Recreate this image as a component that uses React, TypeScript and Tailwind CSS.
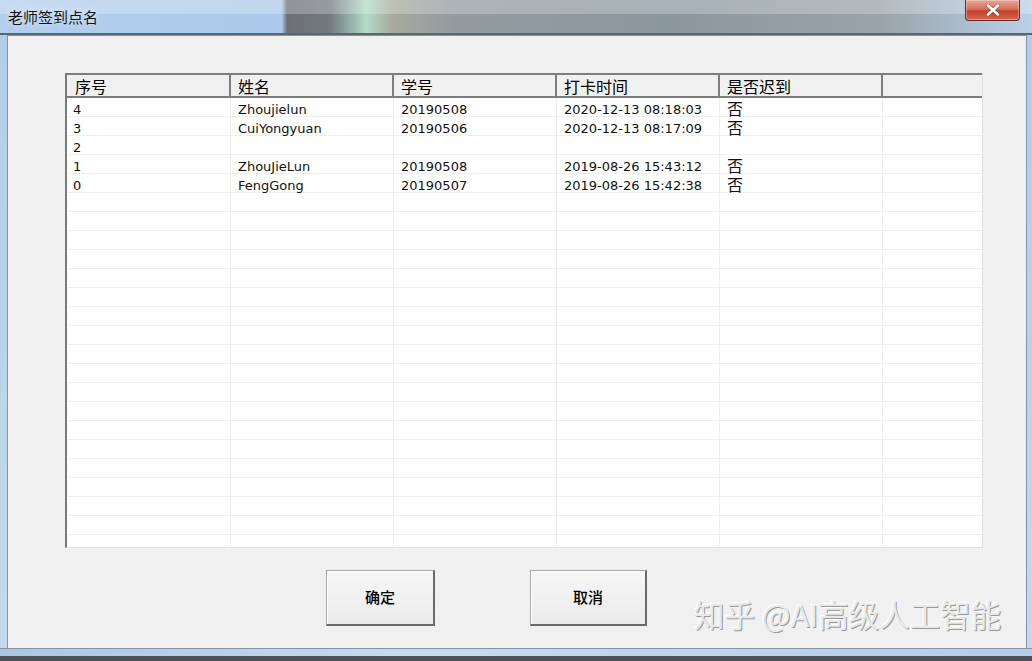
import React from "react";

type Row = { no: string; name: string; sid: string; time: string; late: string };

const rows: Row[] = [
  { no: "4", name: "Zhoujielun", sid: "20190508", time: "2020-12-13 08:18:03", late: "否" },
  { no: "3", name: "CuiYongyuan", sid: "20190506", time: "2020-12-13 08:17:09", late: "否" },
  { no: "2", name: "", sid: "", time: "", late: "" },
  { no: "1", name: "ZhouJieLun", sid: "20190508", time: "2019-08-26 15:43:12", late: "否" },
  { no: "0", name: "FengGong", sid: "20190507", time: "2019-08-26 15:42:38", late: "否" },
];

const headers = ["序号", "姓名", "学号", "打卡时间", "是否迟到", ""];

const cjk = "font-['Noto_Sans_CJK_SC','Noto_Sans',sans-serif]";
const latin = "font-['DejaVu_Sans','Noto_Sans_CJK_SC',sans-serif]";

function TitleBar() {
  return (
    <div className="relative h-[35px] shrink-0 bg-[linear-gradient(to_right,#b3cfee_0%,#abc9ea_27.3%,#6c7176_27.8%,#737a7f_32%,#b2dcc8_35.5%,#a8aa9c_38%,#939b9f_44%,#8b979f_65%,#9aa3a9_85%,#a9bccb_93%,#b8d0e8_100%)]">
      <div className="absolute inset-x-0 top-0 h-[14px] bg-white/25" />
      <div className="absolute inset-x-0 bottom-0 h-[2px] bg-[#5d666e]" />
      <div className={`absolute left-[8px] top-[7px] text-[15px] leading-[20px] text-[#111] ${cjk} [text-shadow:0_0_6px_rgba(255,255,255,0.8)]`}>
        老师签到点名
      </div>
      <div className="absolute right-[12px] top-0 flex h-[21px] w-[55px] items-center justify-center rounded-b-[4px] border border-t-0 border-[#6b2a24] bg-[linear-gradient(to_bottom,#e8a597_0%,#d8705c_45%,#c2412c_55%,#d4664c_100%)] shadow-[inset_0_0_0_1px_rgba(255,255,255,0.35)]">
        <svg width="14" height="12" viewBox="0 0 14 12">
          <path d="M2 1.5 L12 10.5 M12 1.5 L2 10.5" stroke="#3a1410" strokeWidth="4" strokeLinecap="round" opacity="0.35" />
          <path d="M2 1.5 L12 10.5 M12 1.5 L2 10.5" stroke="#ffffff" strokeWidth="2.6" strokeLinecap="round" />
        </svg>
      </div>
    </div>
  );
}

function Table() {
  const widths = ["w-[164px]", "w-[163px]", "w-[163px]", "w-[163px]", "w-[163px]", "flex-1"];
  const empty = Array.from({ length: 24 - rows.length });
  return (
    <div className="flex h-[475px] w-[918px] flex-col overflow-hidden border-l-2 border-r border-b border-l-[#7a7a7a] border-r-[#e2e2e2] border-b-[#e2e2e2] bg-white">
      <div className="flex h-[25px] shrink-0 border-t-2 border-b-2 border-[#7d7d7d] bg-[#f0f0f0]">
        {headers.map((h, i) => (
          <div
            key={i}
            className={`${widths[i]} shrink-0 ${i < 5 ? "border-r-2 border-[#7d7d7d]" : ""} ${i === 0 ? "pl-[8px]" : "pl-[7px]"} pt-[1px] text-[16px] leading-[20px] text-black ${cjk}`}
          >
            {h}
          </div>
        ))}
      </div>
      <div className="flex flex-col">
        {rows.map((r) => (
          <div key={r.no} className="flex h-[19px] shrink-0 border-b border-[#efefef]">
            {[r.no, r.name, r.sid, r.time, r.late, ""].map((v, i) => (
              <div
                key={i}
                className={`${widths[i]} shrink-0 ${i < 5 ? "border-r border-[#efefef]" : ""} ${
                  i === 4
                    ? `pl-[7px] pt-[2px] text-[16px] leading-[16px] ${cjk}`
                    : `${i === 0 ? "pl-[6px]" : "pl-[7px]"} pt-[5px] text-[13px] leading-[13px] ${latin}`
                } whitespace-nowrap text-[#111]`}
              >
                {v}
              </div>
            ))}
          </div>
        ))}
        {empty.map((_, k) => (
          <div key={k} className="flex h-[19px] shrink-0 border-b border-[#efefef]">
            {widths.map((w, i) => (
              <div key={i} className={`${w} shrink-0 ${i < 5 ? "border-r border-[#efefef]" : ""}`} />
            ))}
          </div>
        ))}
      </div>
    </div>
  );
}

function Button({ label }: { label: string }) {
  return (
    <button
      className={`flex h-[56px] w-full items-center justify-center border-t border-l border-r-2 border-b-2 border-t-[#a9a9a9] border-l-[#a9a9a9] border-r-[#6a6a6a] border-b-[#6a6a6a] bg-[linear-gradient(to_bottom,#f6f6f6,#ebebeb)] shadow-[inset_1px_1px_0_#ffffff] text-[15px] font-medium text-black ${cjk}`}
    >
      {label}
    </button>
  );
}

export default function App() {
  return (
    <div className="flex h-[661px] w-[1032px] flex-col overflow-hidden bg-[#b5cfea]">
      <TitleBar />
      <div className="flex flex-1">
        <div className="w-[7px] shrink-0 bg-[linear-gradient(to_bottom,#b0cdea,#c4d9ee)]" />
        <div className="relative flex flex-1 flex-col border-t border-l border-[#8494a4] bg-[#f0f0f0]">
          <div className="ml-[57px] mt-[37px]">
            <Table />
          </div>
          <div className="mt-[22px] flex">
            <div className="ml-[318px] w-[109px]">
              <Button label="确定" />
            </div>
            <div className="ml-[95px] w-[117px]">
              <Button label="取消" />
            </div>
          </div>
          <div
            className={`absolute left-[686px] top-[560px] whitespace-nowrap text-[30.5px] leading-[36px] text-[#e9e9e9] ${cjk} [text-shadow:1px_1px_0_#999999,-1px_-1px_0_#ffffff]`}
          >
            知乎 @AI高级人工智能
          </div>
        </div>
        <div className="w-[6px] shrink-0 border-l border-[#8494a4] bg-[linear-gradient(to_bottom,#b0cdea,#c4d9ee)]" />
      </div>
      <div className="flex h-[13px] shrink-0 flex-col">
        <div className="h-px bg-[#8494a4]" />
        <div className="h-[7px] bg-[linear-gradient(to_right,#a9c6e6,#c6dbef_40%,#b3cdea)]" />
        <div className="flex-1 bg-[#4b5259]" />
      </div>
    </div>
  );
}
